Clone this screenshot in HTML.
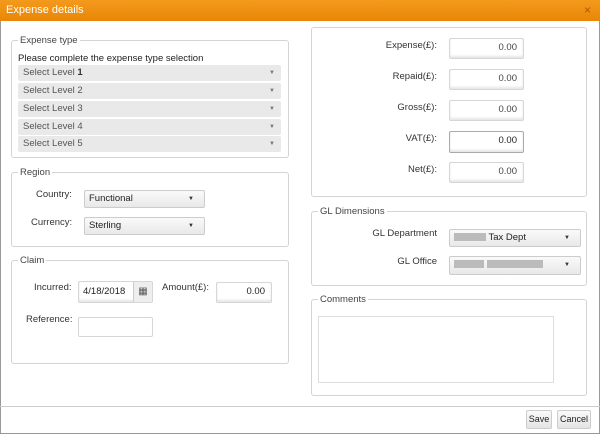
<!DOCTYPE html>
<html><head><meta charset="utf-8"><style>
*{box-sizing:border-box;margin:0;padding:0}
body{width:600px;height:434px;position:relative;background:#fff;font-family:"Liberation Sans",sans-serif;font-size:9.5px;color:#222;overflow:hidden}
.frame{position:absolute;left:0;top:0;width:600px;height:434px;border:1px solid #999}
.a{position:absolute}
.title{left:0;top:0;width:600px;height:21px;background:linear-gradient(#f39a1c,#e98607);color:#fff;font-size:11px;line-height:21px;padding-left:6px}
.fs{position:absolute;border:1px solid #d4d4d4;border-radius:3px}
.lg{position:absolute;top:-7px;left:6px;background:#fff;padding:0 2px;color:#444;font-size:9.5px;line-height:13px}
.sel{position:absolute;background:#e9e9e9;border-radius:2px;color:#555;line-height:16px;padding-left:5px}
.sel:after{content:"▼";position:absolute;right:6px;top:0;font-size:6px;color:#777}
.dd{position:absolute;background:linear-gradient(#fafafa,#e8e8e8);border:1px solid #ccc;border-radius:2px;line-height:16px;padding-left:4px;color:#222}
.dd:after{content:"▼";position:absolute;right:10px;top:0;font-size:6px;color:#333}
.in{position:absolute;border:1px solid #d6d6d6;border-radius:2px;background:#fff;box-shadow:inset 0 -2px 2px #e6e6e6;text-align:right;padding-right:6px;line-height:18px;color:#444}
.lb{position:absolute;color:#333}
.r{text-align:right;width:100px}
.btn{position:absolute;border:1px solid #ccc;border-radius:2px;background:linear-gradient(#fafafa,#e4e4e4);line-height:16px;text-align:center;color:#222;font-size:9px}
.blur{display:inline-block;height:8px;background:#bbb;vertical-align:middle}
</style></head><body>
<div class="frame"></div>
<div class="a title">Expense details</div>
<div class="a" style="left:584px;top:3px;color:#a85a00;font-size:12px">×</div>

<div class="fs" style="left:11px;top:40px;width:278px;height:118px"><div class="lg">Expense type</div></div>
<div class="lb" style="left:18px;top:53px;color:#222">Please complete the expense type selection</div>
<div class="sel" style="left:18px;top:65px;width:263px;height:16px">Select Level <b style="color:#333">1</b></div>
<div class="sel" style="left:18px;top:83px;width:263px;height:16px">Select Level 2</div>
<div class="sel" style="left:18px;top:101px;width:263px;height:16px">Select Level 3</div>
<div class="sel" style="left:18px;top:119px;width:263px;height:16px">Select Level 4</div>
<div class="sel" style="left:18px;top:136px;width:263px;height:16px">Select Level 5</div>

<div class="fs" style="left:11px;top:172px;width:278px;height:75px"><div class="lg">Region</div></div>
<div class="lb" style="left:36px;top:189px">Country:</div>
<div class="dd" style="left:84px;top:190px;width:121px;height:18px">Functional</div>
<div class="lb" style="left:31px;top:217px">Currency:</div>
<div class="dd" style="left:84px;top:217px;width:121px;height:18px">Sterling</div>

<div class="fs" style="left:11px;top:260px;width:278px;height:104px"><div class="lg">Claim</div></div>
<div class="lb" style="left:34px;top:282px">Incurred:</div>
<div class="in" style="left:78px;top:281px;width:75px;height:22px;text-align:left;padding-left:4px;color:#222;line-height:20px">4/18/2018</div>
<div class="a" style="left:133px;top:282px;width:19px;height:20px;border-left:1px solid #ccc;background:#eee;text-align:center;line-height:20px;font-size:10px;color:#555">▦</div>
<div class="lb" style="left:162px;top:282px">Amount(£):</div>
<div class="in" style="left:216px;top:282px;width:56px;height:21px;color:#222">0.00</div>
<div class="lb" style="left:26px;top:314px">Reference:</div>
<div class="in" style="left:78px;top:317px;width:75px;height:20px;box-shadow:none"></div>

<div class="fs" style="left:311px;top:27px;width:276px;height:170px"></div>
<div class="lb r" style="left:337px;top:40px">Expense(£):</div>
<div class="in" style="left:449px;top:38px;width:75px;height:21px">0.00</div>
<div class="lb r" style="left:337px;top:71px">Repaid(£):</div>
<div class="in" style="left:449px;top:69px;width:75px;height:21px">0.00</div>
<div class="lb r" style="left:337px;top:102px">Gross(£):</div>
<div class="in" style="left:449px;top:100px;width:75px;height:21px">0.00</div>
<div class="lb r" style="left:337px;top:133px">VAT(£):</div>
<div class="in" style="left:449px;top:131px;width:75px;height:22px;border-color:#aaa;color:#222">0.00</div>
<div class="lb r" style="left:337px;top:164px">Net(£):</div>
<div class="in" style="left:449px;top:162px;width:75px;height:21px">0.00</div>

<div class="fs" style="left:311px;top:211px;width:276px;height:75px"><div class="lg">GL Dimensions</div></div>
<div class="lb r" style="left:337px;top:228px">GL Department</div>
<div class="dd" style="left:449px;top:229px;width:132px;height:18px"><span class="blur" style="width:32px"></span> Tax Dept</div>
<div class="lb r" style="left:337px;top:256px">GL Office</div>
<div class="dd" style="left:449px;top:256px;width:132px;height:19px"><span class="blur" style="width:30px"></span> <span class="blur" style="width:56px"></span></div>

<div class="fs" style="left:311px;top:299px;width:276px;height:97px"><div class="lg">Comments</div></div>
<div class="a" style="left:318px;top:316px;width:236px;height:67px;border:1px solid #ddd"></div>

<div class="a" style="left:0;top:406px;width:600px;height:1px;background:#ccc"></div>
<div class="btn" style="left:526px;top:410px;width:26px;height:19px">Save</div>
<div class="btn" style="left:557px;top:410px;width:34px;height:19px">Cancel</div>
</body></html>
